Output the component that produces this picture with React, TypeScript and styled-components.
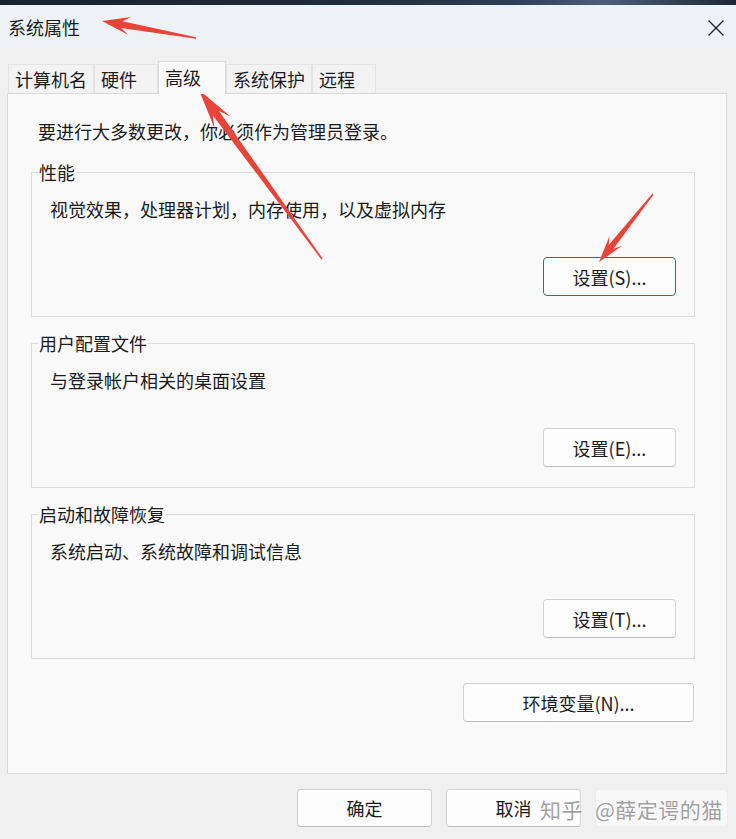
import React from "react";
import styled, { createGlobalStyle, css } from "styled-components";

const GlobalStyle = createGlobalStyle`
  html, body {
    margin: 0;
    padding: 0;
    background: #f0f0f0;
  }
  body {
    font-family: "Noto Sans CJK SC", "Noto Sans", sans-serif;
    color: #1b1b1b;
  }
`;

const Window = styled.div`
  position: relative;
  width: 736px;
  height: 839px;
  overflow: hidden;
  display: flex;
  flex-direction: column;
  background: #f0f0f0;
`;

/* sliver of the desktop wallpaper above the dialog */
const DesktopStrip = styled.div`
  flex: none;
  height: 5px;
  background: linear-gradient(90deg, #18212e 0%, #1f2c3d 45%, #2c3f57 70%, #4a607a 82%, #1c2838 100%);
`;

const TitleBar = styled.div`
  flex: none;
  height: 44px;
  display: flex;
  align-items: center;
  justify-content: space-between;
  padding: 0 12px 0 8px;
  background: #eef2f7;
`;

const Title = styled.span`
  font-size: 18px;
  line-height: 24px;
`;

const CloseIcon = styled.svg`
  width: 16px;
  height: 16px;
  margin-top: 2px;
`;

const TabStrip = styled.div`
  flex: none;
  display: flex;
  align-items: flex-end;
  height: 32px;
  margin-top: 12px;
  padding-left: 8px;
`;

const Tab = styled.div<{ $active?: boolean }>`
  box-sizing: border-box;
  min-width: 64px;
  height: 29px;
  padding: 0 6px 0 6px;
  font-size: 18px;
  line-height: 28px;
  white-space: nowrap;
  border: 1px solid #e4e4e4;
  border-bottom: none;
  background: #f3f3f3;

  ${(p) =>
    p.$active &&
    css`
      position: relative;
      z-index: 1;
      min-width: 68px;
      height: 33px;
      margin-bottom: -1px;
      line-height: 30px;
      background: #f9f9f9;
      border-color: #dadada;
    `}
`;

const Panel = styled.div`
  box-sizing: border-box;
  flex: none;
  height: 681px;
  margin: 0 9px 0 7px;
  padding: 25px 31px 0 23px;
  display: flex;
  flex-direction: column;
  border: 1px solid #dadada;
  background: #f9f9f9;
`;

const Intro = styled.div`
  margin-left: 7px;
  font-size: 18px;
  line-height: 24px;
`;

const GroupList = styled.div`
  display: flex;
  flex-direction: column;
  gap: 26px;
  margin-top: 29px;
`;

const GroupBox = styled.div`
  box-sizing: border-box;
  position: relative;
  height: 145px;
  padding: 24px 18px 20px 18px;
  display: flex;
  flex-direction: column;
  justify-content: space-between;
  border: 1px solid #dcdcdc;
`;

const GroupLabel = styled.span`
  position: absolute;
  top: -13px;
  left: 6px;
  padding: 0 1px;
  font-size: 18px;
  line-height: 24px;
  background: #f9f9f9;
`;

const GroupText = styled.div`
  font-size: 18px;
  line-height: 24px;
`;

const DialogButton = styled.button<{ $w: number; $h?: number; $primary?: boolean }>`
  box-sizing: border-box;
  flex: none;
  width: ${(p) => p.$w}px;
  height: ${(p) => p.$h ?? 39}px;
  padding: 0;
  font-family: inherit;
  font-size: 18px;
  line-height: 24px;
  color: #1b1b1b;
  background: #fdfdfd;
  border: 1px solid #d2d2d2;
  border-bottom-color: #bdbdbd;
  border-radius: 4px;

  ${(p) =>
    p.$primary &&
    css`
      border: 1px solid #2b6c99;
    `}

  &:disabled {
    background: #f8f8f8;
    border-color: #ececec;
    color: #a8a8a8;
  }
`;

const GroupButton = styled(DialogButton)`
  align-self: flex-end;
`;

const EnvButton = styled(DialogButton)`
  align-self: flex-end;
  margin-top: 24px;
  margin-right: 1px;
`;

const Footer = styled.div`
  display: flex;
  justify-content: flex-end;
  gap: 14px;
  padding: 15px 8px 0 0;
`;

const Watermark = styled.div`
  position: absolute;
  left: 540px;
  top: 796px;
  display: flex;
  gap: 12px;
  font-size: 21px;
  line-height: 26px;
  letter-spacing: 0.5px;
  white-space: pre;
  color: rgba(135, 135, 135, 0.8);
  text-shadow: 0 0 2px #ffffff, 0 0 2px #ffffff;
  pointer-events: none;
`;

const Annotations = styled.svg`
  position: absolute;
  left: 0;
  top: 0;
  pointer-events: none;
`;

type Pt = [number, number];

function arrowPoints(tip: Pt, tail: Pt, headLen: number, headHalf: number) {
  const dx = tail[0] - tip[0];
  const dy = tail[1] - tip[1];
  const len = Math.hypot(dx, dy);
  const d = [dx / len, dy / len];
  const n = [-d[1], d[0]];
  const at = (t: number, w: number) =>
    `${(tip[0] + d[0] * t + n[0] * w).toFixed(1)},${(tip[1] + d[1] * t + n[1] * w).toFixed(1)}`;
  const neck = headLen * 0.72;
  return [
    at(0, 0),
    at(headLen, headHalf),
    at(neck, headHalf * 0.38),
    at(len, 0.8),
    at(len, -0.8),
    at(neck, -headHalf * 0.38),
    at(headLen, -headHalf),
  ].join(" ");
}

const arrows: { tip: Pt; tail: Pt; head: number; half: number }[] = [
  { tip: [102, 21], tail: [196, 38], head: 28, half: 9 },
  { tip: [199, 90], tail: [322, 259], head: 40, half: 10 },
  { tip: [599, 262], tail: [653, 194], head: 27, half: 8 },
];

const groups = [
  { label: "性能", text: "视觉效果，处理器计划，内存使用，以及虚拟内存", button: "设置(S)...", primary: true },
  { label: "用户配置文件", text: "与登录帐户相关的桌面设置", button: "设置(E)..." },
  { label: "启动和故障恢复", text: "系统启动、系统故障和调试信息", button: "设置(T)..." },
];

const tabs = ["计算机名", "硬件", "高级", "系统保护", "远程"];

export default function App() {
  return (
    <>
      <GlobalStyle />
      <Window>
        <DesktopStrip />
        <TitleBar>
          <Title>系统属性</Title>
          <CloseIcon viewBox="0 0 16 16">
            <path d="M0.5 0.5 L15.5 15.5 M15.5 0.5 L0.5 15.5" stroke="#1b1b1b" strokeWidth="1.3" fill="none" />
          </CloseIcon>
        </TitleBar>

        <TabStrip>
          {tabs.map((t) => (
            <Tab key={t} $active={t === "高级"}>
              {t}
            </Tab>
          ))}
        </TabStrip>

        <Panel>
          <Intro>要进行大多数更改，你必须作为管理员登录。</Intro>
          <GroupList>
            {groups.map((g) => (
              <GroupBox key={g.label}>
                <GroupLabel>{g.label}</GroupLabel>
                <GroupText>{g.text}</GroupText>
                <GroupButton $w={133} $primary={g.primary}>
                  {g.button}
                </GroupButton>
              </GroupBox>
            ))}
          </GroupList>
          <EnvButton $w={231}>环境变量(N)...</EnvButton>
        </Panel>

        <Footer>
          <DialogButton $w={135} $h={38}>确定</DialogButton>
          <DialogButton $w={135} $h={38}>取消</DialogButton>
          <DialogButton $w={133} $h={38} disabled />
        </Footer>

        <Watermark>
          <span>知乎</span>
          <span>@薛定谔的猫</span>
        </Watermark>

        <Annotations width={736} height={839} viewBox="0 0 736 839">
          {arrows.map((a, i) => (
            <polygon key={i} points={arrowPoints(a.tip, a.tail, a.head, a.half)} fill="#e8443a" />
          ))}
        </Annotations>
      </Window>
    </>
  );
}
